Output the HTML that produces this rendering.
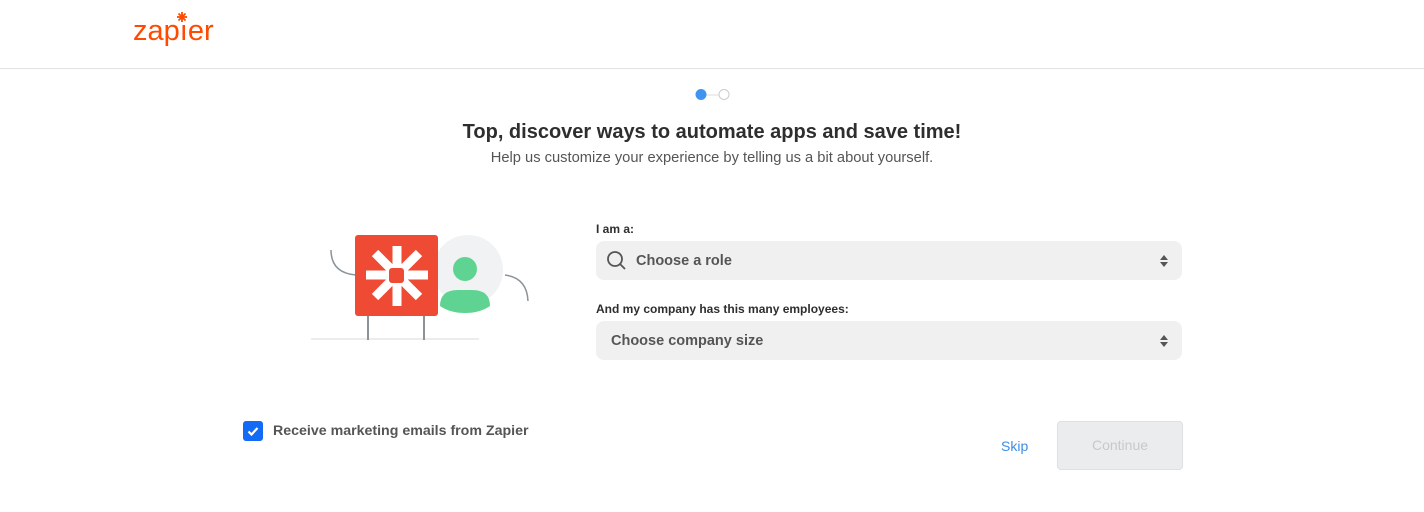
<!DOCTYPE html>
<html><head><meta charset="utf-8"><style>
body{margin:0;width:1424px;height:512px;background:#fff;font-family:"Liberation Sans",sans-serif;position:relative;overflow:hidden;color:#2d2e2e}
.hdr{position:absolute;left:0;top:0;width:1424px;height:68px;border-bottom:1px solid #e2e2e2}
.logo{position:absolute;left:133px;top:15px;font-size:29px;color:#ff4a00;letter-spacing:0;font-weight:400}
h1{position:absolute;top:121px;left:0;width:1424px;text-align:center;margin:0;font-size:20px;font-weight:700;color:#2d2e2e}
.sub{position:absolute;top:150px;left:0;width:1424px;text-align:center;font-size:14.7px;color:#555}
.lbl{position:absolute;left:596px;font-size:12px;font-weight:700;color:#2d2e2e}
.sel{position:absolute;left:596px;width:586px;height:39px;background:#f0f0f0;border-radius:8px;font-size:14.5px;color:#555;font-weight:700;line-height:40px}
.arr{position:absolute;right:13px;top:12px}
.cb{position:absolute;left:243px;top:421px;width:20px;height:20px;background:#136bf5;border-radius:3px}
.cbt{position:absolute;left:273px;top:423px;font-size:14.2px;font-weight:700;color:#555}
.skip{position:absolute;left:1001px;top:438px;font-size:14px;color:#3d8ee6}
.btn{position:absolute;left:1057px;top:421px;width:124px;height:47px;background:#ebecee;border:1px solid #e0e0e0;border-radius:4px;text-align:center;line-height:47px;font-size:14px;color:#c6c9cc}
</style></head><body>
<div class="hdr"><div class="logo">zapıer</div>
<svg style="position:absolute;left:176px;top:11px" width="12" height="12" viewBox="0 0 12 12"><g stroke="#ff4a00" stroke-width="1.8"><line x1="6" y1="1" x2="6" y2="11"/><line x1="1" y1="6" x2="11" y2="6"/><line x1="2.5" y1="2.5" x2="9.5" y2="9.5"/><line x1="9.5" y1="2.5" x2="2.5" y2="9.5"/></g></svg>
</div>
<svg style="position:absolute;left:690px;top:87px" width="45" height="16"><line x1="8" y1="8" x2="30" y2="8" stroke="#ddd" stroke-width="1"/><circle cx="11" cy="7.5" r="5.5" fill="#3d95ef"/><circle cx="34" cy="7.5" r="5" fill="#fff" stroke="#ccc"/></svg>
<h1>Top, discover ways to automate apps and save time!</h1>
<div class="sub">Help us customize your experience by telling us a bit about yourself.</div>
<svg style="position:absolute;left:300px;top:220px" width="240" height="130" viewBox="300 220 240 130">
<line x1="311" y1="339" x2="479" y2="339" stroke="#e6e6e6" stroke-width="1.5"/>
<path d="M331 250 Q331 273 356 275" fill="none" stroke="#8a9399" stroke-width="1.5"/>
<path d="M505 275 Q527 278 528 301" fill="none" stroke="#8a9399" stroke-width="1.5"/>
<circle cx="468" cy="270" r="35" fill="#f0f2f3"/>
<circle cx="465" cy="269" r="12" fill="#5fd492"/>
<path d="M440 306 Q440 290 458 290 H472 Q490 290 490 306 Q480 313 465 313 Q450 313 440 306Z" fill="#5fd492"/>
<line x1="368" y1="316" x2="368" y2="340" stroke="#8a9399" stroke-width="2"/>
<line x1="424" y1="316" x2="424" y2="340" stroke="#8a9399" stroke-width="2"/>
<rect x="355" y="235" width="83" height="81" rx="3" fill="#ef4a33"/>
<g stroke="#fff" stroke-width="9"><line x1="397" y1="246" x2="397" y2="306"/><line x1="366" y1="275" x2="428" y2="275"/><line x1="375" y1="253" x2="419" y2="297"/><line x1="419" y1="253" x2="375" y2="297"/></g>
<rect x="389" y="268" width="15" height="15" rx="3" fill="#ef4a33"/>
</svg>
<div class="lbl" style="top:222px">I am a:</div>
<div class="sel" style="top:241px"><svg style="position:absolute;left:10px;top:9px" width="21" height="21" viewBox="0 0 21 21"><circle cx="9" cy="9" r="7" fill="none" stroke="#555" stroke-width="1.8"/><line x1="14" y1="14" x2="19" y2="19" stroke="#555" stroke-width="1.8"/></svg><span style="margin-left:40px">Choose a role</span>
<svg class="arr" width="10" height="16"><path d="M1 7L5 2L9 7Z M1 9L5 14L9 9Z" fill="#555"/></svg></div>
<div class="lbl" style="top:302px">And my company has this many employees:</div>
<div class="sel" style="top:321px"><span style="margin-left:15px">Choose company size</span>
<svg class="arr" width="10" height="16"><path d="M1 7L5 2L9 7Z M1 9L5 14L9 9Z" fill="#555"/></svg></div>
<div class="cb"><svg width="20" height="20"><path d="M5.5 10.5L8.5 13.5L14.5 7" fill="none" stroke="#fff" stroke-width="2.2"/></svg></div>
<div class="cbt">Receive marketing emails from Zapier</div>
<div class="skip">Skip</div>
<div class="btn">Continue</div>
</body></html>
